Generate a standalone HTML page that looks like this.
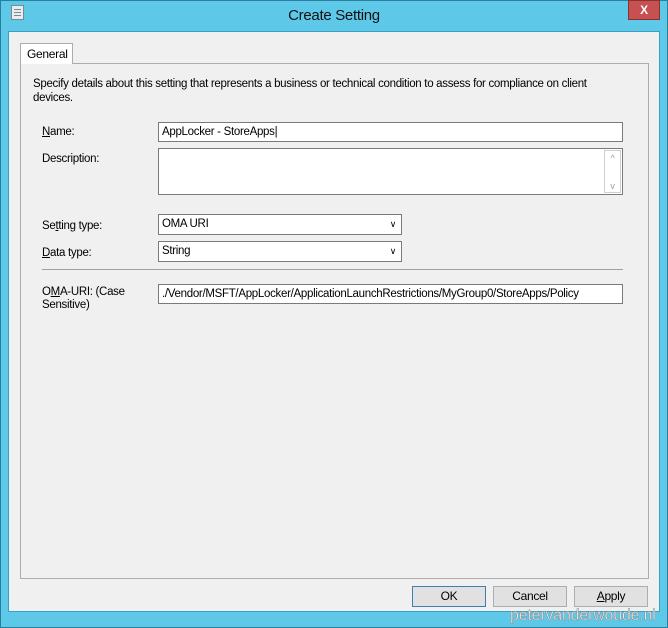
<!DOCTYPE html>
<html><head><style>
*{margin:0;padding:0;box-sizing:border-box}
body{width:668px;height:628px;background:#5ec8e9;position:relative;overflow:hidden;font-family:"Liberation Sans",sans-serif;font-size:11.5px;color:#000;letter-spacing:-0.3px}
.a{position:absolute}
.frame{left:0;top:0;width:668px;height:628px;border:1px solid #2a7ea0}
.client{left:8px;top:31px;width:652px;height:581px;background:#f0f0f0;border:1px solid #3b9fc4}
.input{background:#fff;border:1px solid #7a7a7a;padding:0 3px;line-height:18px}
.sel{background:#fff;border:1px solid #7a7a7a;padding:0 3px;line-height:19px}
.btn{background:#e1e1e1;border:1px solid #adadad;text-align:center;line-height:19px;font-size:12px}
u{text-decoration:underline}
</style></head><body>
<div class="a frame"></div>
<div class="a" style="left:11px;top:5px;width:13px;height:15px;border:1px solid #7a8a90;background:#e8eef0"></div>
<div class="a" style="left:14px;top:9px;width:7px;height:1px;background:#7a8a90;box-shadow:0 3px 0 #7a8a90,0 6px 0 #7a8a90"></div>
<div class="a" style="left:0;top:7px;width:668px;text-align:center;font-size:15px;color:#111">Create Setting</div>
<div class="a" style="left:628px;top:0;width:32px;height:20px;background:#c75050;border:1px solid #8a3030;color:#fff;font-weight:bold;text-align:center;font-size:12px;line-height:18px">X</div>
<div class="a client"></div>
<div class="a" style="left:20px;top:63px;width:629px;height:516px;border:1px solid #adadad;background:#f0f0f0"></div>
<div class="a" style="left:20px;top:43px;width:53px;height:21px;border:1px solid #adadad;border-bottom:none;background:#fff;padding:3px 0 0 6px;font-size:12px">General</div>
<div class="a" style="left:33px;top:77px;width:600px;line-height:14px">Specify details about this setting that represents a business or technical condition to assess for compliance on client<br>devices.</div>
<div class="a" style="left:42px;top:126px"><u>N</u>ame:</div>
<div class="a input" style="left:158px;top:122px;width:465px;height:20px">AppLocker - StoreApps|</div>
<div class="a" style="left:42px;top:153px">Description:</div>
<div class="a input" style="left:158px;top:148px;width:465px;height:47px"></div>
<div class="a" style="left:604px;top:150px;width:17px;height:43px;border:1px solid #d0d0d0;background:#fff;color:#999;font-size:9px;text-align:center;line-height:14px">^<br><br>v</div>
<div class="a" style="left:42px;top:220px">Se<u>t</u>ting type:</div>
<div class="a sel" style="left:158px;top:214px;width:244px;height:21px">OMA URI<span style="position:absolute;right:5px;top:0;font-size:9px">&#8744;</span></div>
<div class="a" style="left:42px;top:247px"><u>D</u>ata type:</div>
<div class="a sel" style="left:158px;top:241px;width:244px;height:21px">String<span style="position:absolute;right:5px;top:0;font-size:9px">&#8744;</span></div>
<div class="a" style="left:42px;top:269px;width:581px;height:1px;background:#a0a0a0"></div>
<div class="a" style="left:42px;top:286px;line-height:13px">O<u>M</u>A-URI: (Case<br>Sensitive)</div>
<div class="a input" style="left:158px;top:284px;width:465px;height:20px">./Vendor/MSFT/AppLocker/ApplicationLaunchRestrictions/MyGroup0/StoreApps/Policy</div>
<div class="a btn" style="left:412px;top:586px;width:74px;height:21px;border-color:#3c7fb1">OK</div>
<div class="a btn" style="left:493px;top:586px;width:74px;height:21px">Cancel</div>
<div class="a btn" style="left:574px;top:586px;width:74px;height:21px"><u>A</u>pply</div>
<div class="a" style="left:510px;top:607px;font-size:16px;color:#f4f4f4;letter-spacing:-0.2px;-webkit-text-stroke:0.5px #888">petervanderwoude.nl</div>
</body></html>
